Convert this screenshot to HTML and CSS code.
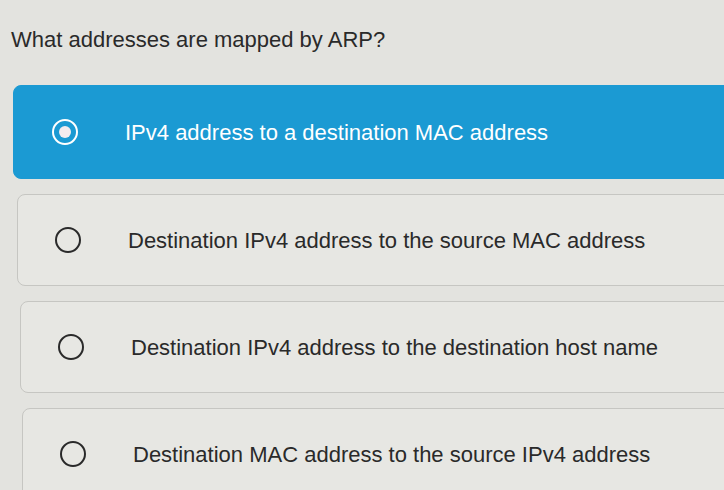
FILE: index.html
```html
<!DOCTYPE html>
<html lang="en">
<head>
<meta charset="utf-8">
<title>ARP quiz</title>
<link rel="stylesheet" href="styles.css">
</head>
<body>
<main class="quiz">
  <h1 class="question">What addresses are mapped by ARP?</h1>
  <ul class="options">
    <li class="option option--selected">
      <span class="radio radio--on"></span>
      <span class="label">IPv4 address to a destination MAC address</span>
    </li>
    <li class="option">
      <span class="radio"></span>
      <span class="label">Destination IPv4 address to the source MAC address</span>
    </li>
    <li class="option">
      <span class="radio"></span>
      <span class="label">Destination IPv4 address to the destination host name</span>
    </li>
    <li class="option">
      <span class="radio"></span>
      <span class="label">Destination MAC address to the source IPv4 address</span>
    </li>
  </ul>
</main>
</body>
</html>
```

FILE: styles.css
```css
html, body {
  margin: 0;
  padding: 0;
  height: 100%;
  overflow: hidden;
}

body {
  background: #e3e3df;
  color: #2a2a2a;
  font-family: "Liberation Sans", Arial, Helvetica, sans-serif;
  font-size: 22px;
}

.quiz {
  padding-top: 27px;
}

.question {
  margin: 0 0 33px 11px;
  font-size: 22px;
  font-weight: normal;
  line-height: 25px;
}

.options {
  list-style: none;
  margin: 0 -60px 0 0;
  padding: 0;
  display: flex;
  flex-direction: column;
  gap: 15px;
}

.option {
  box-sizing: border-box;
  min-height: 92px;
  display: flex;
  align-items: center;
  gap: 47px;
  padding-left: 37px;
  background: #e7e7e3;
  border: 1px solid #c6c6c2;
  border-radius: 8px;
  line-height: 25px;
}

/* the list leans a little to the right as it goes down */
.option:nth-child(1) { margin-left: 13px; }
.option:nth-child(2) { margin-left: 17px; }
.option:nth-child(3) { margin-left: 20px; }
.option:nth-child(4) { margin-left: 22px; }

.option--selected {
  min-height: 94px;
  background: #1b9ad3;
  border-color: #1b9ad3;
  color: #ffffff;
  padding-left: 38px;
}

.radio {
  flex: none;
  box-sizing: border-box;
  width: 26px;
  height: 26px;
  border: 2.5px solid #2a2a2a;
  border-radius: 50%;
  display: flex;
  align-items: center;
  justify-content: center;
}

.radio--on {
  border-color: #ffffff;
}

.radio--on::after {
  content: "";
  width: 12px;
  height: 12px;
  border-radius: 50%;
  background: #f3ecef;
}

.label {
  white-space: nowrap;
}
```
